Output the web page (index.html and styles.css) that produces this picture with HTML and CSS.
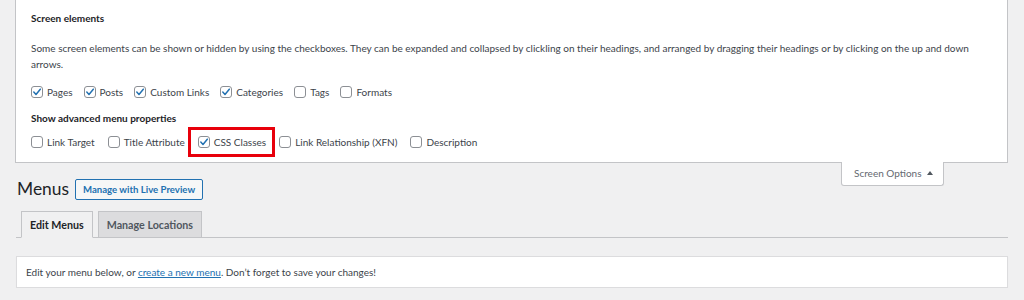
FILE: index.html
```html
<!DOCTYPE html>
<html lang="en">
<head>
<meta charset="utf-8">
<title>Menus</title>
<link rel="stylesheet" href="styles.css">
</head>
<body>
<div class="screen-meta">
  <h5 class="prefs-title">Screen elements</h5>
  <p class="prefs-desc">Some screen elements can be shown or hidden by using the checkboxes. They can be expanded and collapsed by clickling on their headings, and arranged by dragging their headings or by clicking on the up and down<br>arrows.</p>
  <div class="cb-row row1">
    <label class="cb-item"><span class="cb"><svg viewBox="0 0 12 12" width="12" height="12"><path d="M2.8 6.1 L5 8.4 L9.3 3.2"/></svg></span>Pages</label>
    <label class="cb-item"><span class="cb"><svg viewBox="0 0 12 12" width="12" height="12"><path d="M2.8 6.1 L5 8.4 L9.3 3.2"/></svg></span>Posts</label>
    <label class="cb-item"><span class="cb"><svg viewBox="0 0 12 12" width="12" height="12"><path d="M2.8 6.1 L5 8.4 L9.3 3.2"/></svg></span>Custom Links</label>
    <label class="cb-item"><span class="cb"><svg viewBox="0 0 12 12" width="12" height="12"><path d="M2.8 6.1 L5 8.4 L9.3 3.2"/></svg></span>Categories</label>
    <label class="cb-item"><span class="cb"></span>Tags</label>
    <label class="cb-item"><span class="cb"></span>Formats</label>
  </div>
  <h5 class="prefs-title adv">Show advanced menu properties</h5>
  <div class="cb-row row2">
    <label class="cb-item"><span class="cb"></span>Link Target</label>
    <label class="cb-item"><span class="cb"></span>Title Attribute</label>
    <label class="cb-item hl"><span class="cb"><svg viewBox="0 0 12 12" width="12" height="12"><path d="M2.8 6.1 L5 8.4 L9.3 3.2"/></svg></span>CSS Classes</label>
    <label class="cb-item"><span class="cb"></span>Link Relationship (XFN)</label>
    <label class="cb-item"><span class="cb"></span>Description</label>
  </div>
</div>
<div class="meta-links">
  <span class="so-tab">Screen Options<svg class="so-arrow" viewBox="0 0 6 4" width="6" height="4"><polygon points="0,4 3,0 6,4"/></svg></span>
</div>
<div class="wrap">
  <div class="title-row">
    <h1 class="page-title">Menus</h1>
    <a class="title-action">Manage with Live Preview</a>
  </div>
  <nav class="tabs">
    <a class="tab active">Edit Menus</a>
    <a class="tab">Manage Locations</a>
  </nav>
  <div class="manage-menus">Edit your menu below, or <a class="link">create a new menu</a>. Don’t forget to save your changes!</div>
</div>
</body>
</html>
```
FILE: styles.css
```css
html, body {
  margin: 0;
  padding: 0;
}
body {
  background: #f0f0f1;
  font-family: "Segoe UI", Lato, "Liberation Sans", sans-serif;
  font-size: 10px;
  line-height: 16px;
  color: #3c434a;
}
.screen-meta {
  margin: 0 16px 0 15px;
  background: #fff;
  border: 1px solid #c3c4c7;
  border-top: 0;
  padding: 10px 15px 12px;
}
.prefs-title {
  margin: 0;
  font-size: 10px;
  line-height: 16px;
  font-weight: 700;
  color: #1d2327;
}
.prefs-desc {
  margin: 14px 0 0;
  white-space: nowrap;
}
.cb-row {
  display: flex;
  margin-top: 12px;
  height: 16px;
  align-items: center;
}
.prefs-title.adv {
  margin-top: 10px;
}
.row2 {
  margin-top: 8px;
}
.cb-item {
  display: inline-flex;
  align-items: center;
  gap: 4px;
  margin-right: 11px;
}
.row2 .cb-item {
  margin-right: 13px;
}
.cb {
  box-sizing: border-box;
  width: 12px;
  height: 12px;
  border: 1px solid #8c8f94;
  border-radius: 3px;
  background: #fff;
  position: relative;
  flex: none;
}
.cb svg {
  position: absolute;
  left: -1px;
  top: -1px;
}
.cb svg path {
  fill: none;
  stroke: #2271b1;
  stroke-width: 1.5;
  stroke-linecap: round;
  stroke-linejoin: round;
}
.hl {
  position: relative;
}
.hl::after {
  content: "";
  position: absolute;
  left: -10px;
  right: -9px;
  top: -7px;
  bottom: -7px;
  border: 3px solid #e8000b;
}
.meta-links {
  float: right;
  margin: -1px 80px 0 0;
}
.so-tab {
  display: flex;
  align-items: center;
  gap: 5px;
  width: 103px;
  box-sizing: border-box;
  padding: 3px 0 4px 12px;
  background: #fff;
  border: 1px solid #c3c4c7;
  border-top: 0;
  border-radius: 0 0 3px 3px;
  color: #646970;
  line-height: 16px;
}
.so-arrow polygon {
  fill: #50575e;
}
.wrap {
  padding: 14px 16px 0 16px;
}
.title-row {
  display: flex;
  align-items: center;
  height: 24px;
}
.page-title {
  margin: 0;
  font-size: 17.4px;
  line-height: 24px;
  font-weight: 400;
  color: #1d2327;
  padding-left: 1px;
}
.title-action {
  margin-left: 6px;
  box-sizing: border-box;
  height: 21px;
  line-height: 19px;
  padding: 0 7px;
  border: 1px solid #2271b1;
  border-radius: 2px;
  background: #f6f7f7;
  color: #2271b1;
  font-size: 9.6px;
  font-weight: 700;
}
.tabs {
  display: flex;
  align-items: flex-end;
  margin-top: 10px;
  padding-left: 5px;
  border-bottom: 1px solid #c3c4c7;
}
.tab {
  margin-bottom: -1px;
  margin-right: 5px;
  padding: 4px 8px;
  border: 1px solid #c3c4c7;
  background: #dcdcde;
  color: #50575e;
  font-size: 10.7px;
  line-height: 17px;
  font-weight: 700;
}
.tab.active {
  background: #f0f0f1;
  border-bottom-color: #f0f0f1;
  color: #1d2327;
}
.manage-menus {
  margin-top: 18px;
  padding: 7px 9px 7px 9px;
  background: #fff;
  border: 1px solid #dcdcde;
  box-shadow: 0 1px 1px rgba(0,0,0,0.04);
}
.link {
  color: #2271b1;
  text-decoration: underline;
}
```
